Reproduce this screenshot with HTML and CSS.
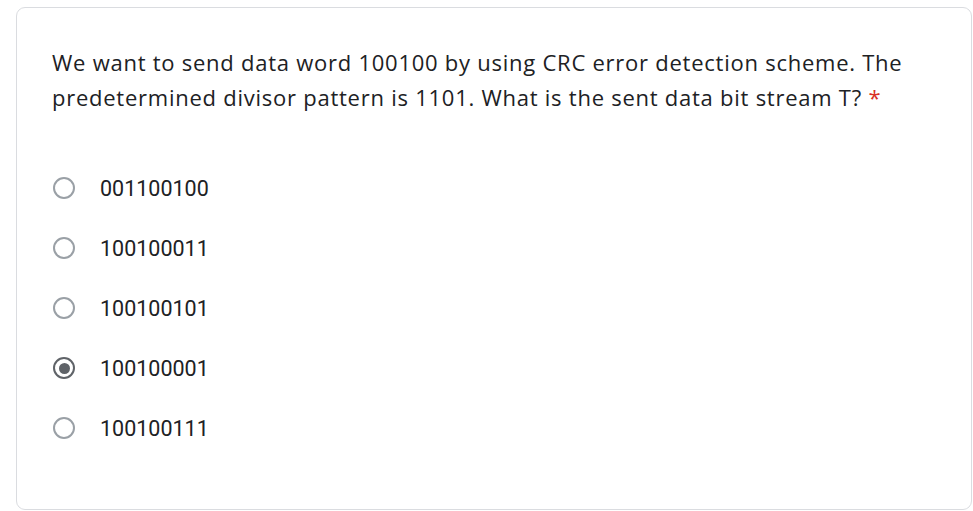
FILE: index.html
```html
<!DOCTYPE html>
<html>
<head>
<meta charset="utf-8">
<link rel="stylesheet" href="styles.css">
</head>
<body>
<div class="card">
  <div class="title">We want to send data word 100100 by using CRC error detection scheme. The predetermined divisor pattern is 1101. What is the sent data bit stream T? <span class="req">*</span></div>
  <div class="options">
    <div class="opt"><span class="radio"></span><span class="label">001100100</span></div>
    <div class="opt"><span class="radio"></span><span class="label">100100011</span></div>
    <div class="opt"><span class="radio"></span><span class="label">100100101</span></div>
    <div class="opt"><span class="radio checked"></span><span class="label">100100001</span></div>
    <div class="opt"><span class="radio"></span><span class="label">100100111</span></div>
  </div>
</div>
</body>
</html>
```
FILE: styles.css
```css
html, body {
  margin: 0;
  padding: 0;
  background: #ffffff;
}
body {
  padding: 7px 1px 0 16px;
  overflow: hidden;
  height: 511px;
  box-sizing: border-box;
}
.card {
  border: 1px solid #dadce0;
  border-radius: 9px;
  background: #fff;
  height: 503px;
  box-sizing: border-box;
  padding: 37px 36px 0 35px;
}
.title {
  font-family: "Open Sans", sans-serif;
  font-size: 22px;
  line-height: 35px;
  color: #202124;
  letter-spacing: 0.75px;
  width: 880px;
}
.req {
  color: #d93025;
  letter-spacing: 0;
}
.options {
  margin-top: 43px;
  display: flex;
  flex-direction: column;
}
.opt {
  height: 60px;
  display: flex;
  align-items: center;
}
.radio {
  flex: none;
  width: 22px;
  height: 22px;
  box-sizing: border-box;
  border: 2.7px solid #9aa0a6;
  border-radius: 50%;
  margin-left: 1px;
  display: flex;
  align-items: center;
  justify-content: center;
}
.radio.checked {
  border-color: #5f6368;
}
.radio.checked::after {
  content: "";
  width: 11px;
  height: 11px;
  border-radius: 50%;
  background: #5f6368;
}
.label {
  margin-left: 25px;
  font-family: Roboto, sans-serif;
  font-size: 21.5px;
  color: #202124;
}
```
